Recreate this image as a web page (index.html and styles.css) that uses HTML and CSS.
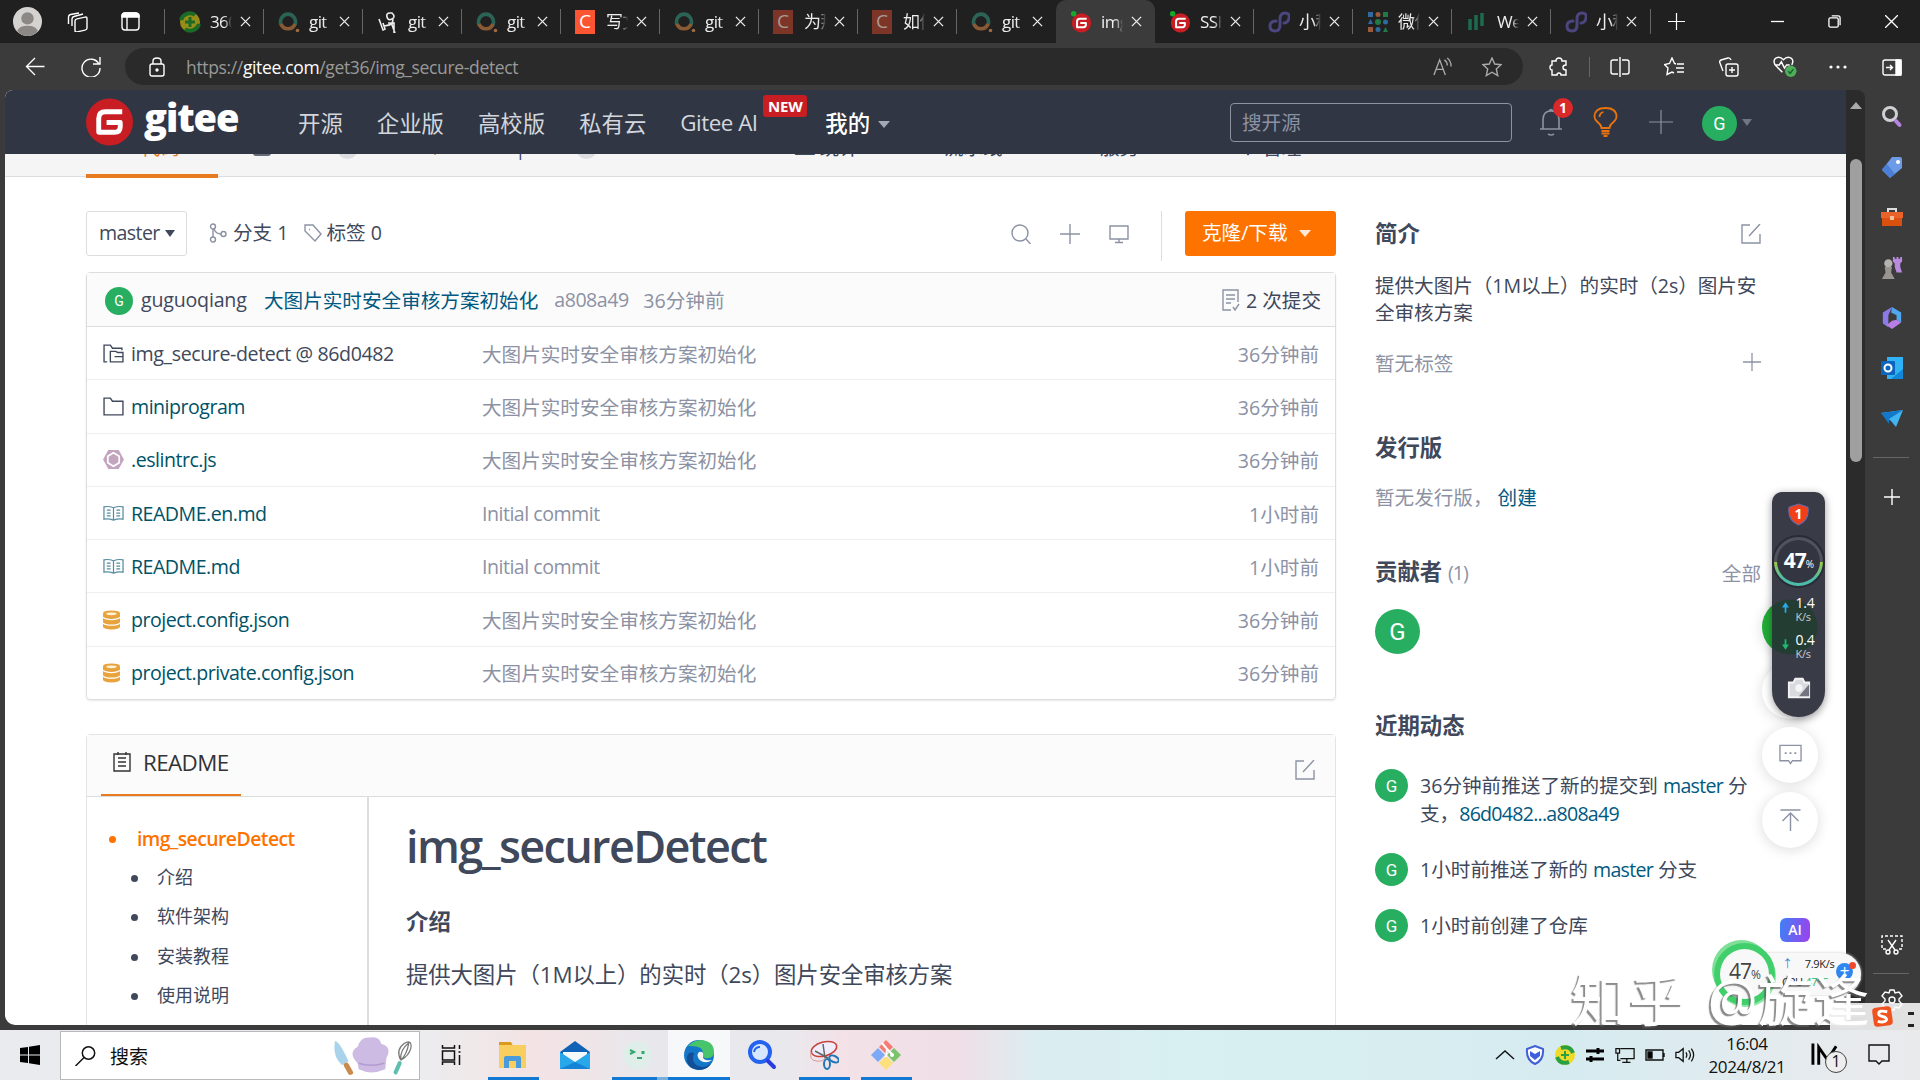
FILE: index.html
```html
<!DOCTYPE html>
<html lang="zh-CN">
<head>
    <meta charset="utf-8">
    <title>img_secure-detect - Gitee</title>
    <link rel="stylesheet" href="styles.css">
</head>

<body>

<svg class="defs" width="0" height="0">
    <symbol id="x" viewBox="0 0 12 12"><path d="M1 1l10 10M11 1L1 11"/></symbol>
    <symbol id="plus" viewBox="0 0 20 20"><path d="M10 0v20M0 10h20"/></symbol>
    <symbol id="edit" viewBox="0 0 20 20"><path d="M9 1H1v18h18v-9M8 12L19 0"/></symbol>
    <symbol id="folder" viewBox="0 0 20 18"><path d="M1 1h6l2 3h10v13H1z"/></symbol>
    <symbol id="book" viewBox="0 0 22 18"><path d="M1 2q5-1 10 1 5-2 10-1v13q-5-1-10 1-5-2-10-1zM11 3v13M4 5.500h4M4 8.500h4M4 11.500h4M14 5.500h4M14 8.500h4M14 11.500h4"/></symbol>
    <symbol id="db" viewBox="0 0 18 20"><path fill="#e8a33d" d="M0 3q0-3 9-3t9 3v14q0 3-9 3t-9-3z"/><path fill="none" stroke="#fff" stroke-width="1.300" d="M0 7q2 2.500 9 2.500T18 7M0 13q2 2.500 9 2.500t9-2.500"/><ellipse cx="9" cy="3.500" rx="5.500" ry="1.400" fill="#fff3d8"/></symbol>
    <symbol id="quant" viewBox="0 0 22 22"><g fill="none" stroke-width="3.600"><path stroke="#2b6355" d="M3 14a7.500 8 0 1 1 14 0"/><path stroke="#8a5a35" d="M3 13a7.500 7.500 0 0 0 14 0"/></g><circle cx="19.500" cy="19.500" r="1.800" fill="#a06a40"/></symbol>
    <symbol id="gitee" viewBox="0 0 48 48"><circle cx="24" cy="24" r="24" fill="#c71d23"/><path fill="none" stroke="#fff" stroke-width="5" stroke-linejoin="round" d="M37 13.500H20q-7 0-7 7v14h16q6 0 6-6v-4H21"/></symbol>
    <symbol id="snake" viewBox="0 0 22 22"><path fill="none" stroke="#4b4580" stroke-width="3" stroke-linecap="round" d="M8 10q-6 0-6 5t5 5 5-6V8q0-6 5-6t4 5-5 5"/></symbol>
</svg>

<!-- browser tabs -->
<div class="titlebar">
    <svg class="profile" viewBox="0 0 28 28"><circle cx="14" cy="14" r="14" fill="#d5d3d0"/><circle cx="14" cy="11" r="6" fill="#8b8885"/><path fill="#8b8885" d="M4 23q2-5 10-5t10 5q-4 5-10 5T4 23"/></svg>
    <svg class="line spaces" viewBox="0 0 22 20"><rect x="8" y="6" width="12" height="13" rx="2" transform="skewY(-12) translate(0 3)"/><path d="M5 14V7q0-2 2-2.500l9-2.500M1.500 12V5q0-2 2-2.500L12 1"/></svg>
    <svg class="line actions" viewBox="0 0 19 19"><rect x="1" y="1" width="17" height="17" rx="3"/><path d="M6 5v13"/><path fill="#fff" d="M1 5V3l2-2h12l3 2v2z"/></svg>
    <div class="tabs">
        <div class="tab"><svg class="fav" viewBox="0 0 22 22"><circle cx="11" cy="11" r="10" fill="#968e16"/><path fill="none" stroke="#1c6a28" stroke-width="4" d="M2 9a9 9 0 0 1 14-5M20 13a9 9 0 0 1-14 5"/><path stroke="#1c6a28" stroke-width="3" d="M11 6v10M6 11h10"/></svg><span>360</span><svg class="close"><use href="#x"/></svg></div>
        <div class="tab"><svg class="fav"><use href="#quant"/></svg><span>git</span><svg class="close"><use href="#x"/></svg></div>
        <div class="tab"><svg class="fav" viewBox="0 0 22 22"><path fill="none" stroke="#eee" stroke-width="1.600" d="M2 8l4 11 2-1-2-6M7 15q5 0 9-3M13 2q-4 0-3 4t5 2 0-6l-2 0M16 8l-1 6 3 8M11 12h6v10"/></svg><span>git</span><svg class="close"><use href="#x"/></svg></div>
        <div class="tab"><svg class="fav"><use href="#quant"/></svg><span>git</span><svg class="close"><use href="#x"/></svg></div>
        <div class="tab"><i class="fav csdn">C</i><span>写文</span><svg class="close"><use href="#x"/></svg></div>
        <div class="tab"><svg class="fav"><use href="#quant"/></svg><span>git</span><svg class="close"><use href="#x"/></svg></div>
        <div class="tab"><i class="fav csdn dim">C</i><span>为那</span><svg class="close"><use href="#x"/></svg></div>
        <div class="tab"><i class="fav csdn dim">C</i><span>如何</span><svg class="close"><use href="#x"/></svg></div>
        <div class="tab"><svg class="fav"><use href="#quant"/></svg><span>git</span><svg class="close"><use href="#x"/></svg></div>
        <div class="tab active"><svg class="fav" viewBox="0 0 22 24"><use href="#gitee" x="1" y="2" width="21" height="22"/><circle cx="3" cy="3" r="3" fill="#17a52b"/></svg><span>img</span><svg class="close"><use href="#x"/></svg></div>
        <div class="tab"><svg class="fav" viewBox="0 0 22 24"><use href="#gitee" x="1" y="2" width="21" height="22"/><circle cx="3" cy="3" r="3" fill="#17a52b"/></svg><span>SSH</span><svg class="close"><use href="#x"/></svg></div>
        <div class="tab"><svg class="fav"><use href="#snake"/></svg><span>小程</span><svg class="close"><use href="#x"/></svg></div>
        <div class="tab"><svg class="fav" viewBox="0 0 22 22"><g fill="#2f6aa0"><rect x="1" y="1" width="5" height="5"/><path d="M1 13l2.500-5L6 13z"/><circle cx="18.500" cy="11" r="2.500"/><circle cx="11" cy="18.500" r="2.500"/></g><g fill="#1f7a45"><rect x="16" y="1" width="5" height="5"/><circle cx="11" cy="11" r="3"/><path d="M16 21l2.500-5 2.500 5z"/></g><g fill="#9a5a3a"><circle cx="11" cy="3.500" r="2.500"/><rect x="1" y="16" width="5" height="5"/></g></svg><span>微信</span><svg class="close"><use href="#x"/></svg></div>
        <div class="tab"><svg class="fav" viewBox="0 0 22 22"><path stroke="#1d6b4f" stroke-width="3.500" d="M4 8v11M10 4v15M16 2v13"/></svg><span>We</span><svg class="close"><use href="#x"/></svg></div>
        <div class="tab"><svg class="fav"><use href="#snake"/></svg><span>小程</span><svg class="close"><use href="#x"/></svg></div>
        <i class="tabs-end"></i>
    </div>
    <svg class="line newtab"><use href="#plus"/></svg>
    <div class="winbtns">
        <svg class="line" viewBox="0 0 14 14"><path d="M0 7h14"/></svg>
        <svg class="line" viewBox="0 0 14 14"><rect x="1" y="3" width="10" height="10" rx="1.500"/><path d="M4 1h7q2 0 2 2v8"/></svg>
        <svg class="line" viewBox="0 0 14 14"><path d="M0 0l14 14M14 0L0 14"/></svg>
    </div>
</div>

<!-- address bar -->
<div class="toolbar">
    <svg class="line back" viewBox="0 0 20 20"><path d="M20 10H1M10 1l-9 9 9 9"/></svg>
    <svg class="line reload" viewBox="0 0 21 21"><path d="M19 8A9 9 0 1 0 20 12M20 1v7h-7"/></svg>
    <div class="address">
        <svg class="line lock" viewBox="0 0 16 20"><rect x="1" y="7" width="14" height="12" rx="2"/><path d="M4 7V4q0-3 4-3t4 3v3"/><circle cx="8" cy="13" r="1" fill="#fff"/></svg>
        <p class="url">https://<b>gitee.com</b>/get36/img_secure-detect</p>
        <svg class="line gray aloud" viewBox="0 0 20 20"><path d="M1 19L7 3l6 16M3 13h8M12 3q3 2 3 6M15 1q4 3 4 9"/></svg>
        <svg class="line gray star" viewBox="0 0 20 20"><path d="M10 1l2.700 6 6.300.700-4.700 4.300 1.400 6.500L10 15.200l-5.700 3.300L5.700 12 1 7.700 7.300 7z"/></svg>
    </div>
    <div class="tools">
        <svg class="line" viewBox="0 0 20 20"><path d="M3 4h4q0-3 3-3t3 3h4v4q-3 0-3 2.500T17 13v5h-5q0-2-2-2t-2 2H3v-5q-2 0-2-2.500T3 8z"/></svg>
        <i class="tool-line"></i>
        <svg class="line" viewBox="0 0 20 20"><path d="M10 0v20M8 3H3Q1 3 1 5v10q0 2 2 2h5M12 3h5q2 0 2 2v10q0 2-2 2h-5"/></svg>
        <svg class="line" viewBox="0 0 20 20"><path d="M12 7l-1.500-.500L8 1 5.500 6.500l-5 1L4 11l-1 6.500 5-2.500 2 1M13 7h7M12 11h8M13 15h7"/></svg>
        <svg class="line" viewBox="0 0 20 20"><rect x="7" y="7" width="12" height="12" rx="2"/><path d="M13 10v6M10 13h6M4 14l-3-8q-1-2 1-3l7-2q2-.500 3 2"/></svg>
        <svg class="line health" viewBox="0 0 23 21"><path d="M9 16L2 9Q0 5 2 3q4-3 8 1 4-4 8-1 2 2 0 6M2 9h4l2-3 3 6 2-3h3"/><circle cx="17" cy="15" r="5.500" fill="#4fae57" stroke="none"/><path d="M14.500 15l2 2 3-4" stroke="#163"/></svg>
        <svg viewBox="0 0 20 20" fill="#fff"><circle cx="3" cy="10" r="1.600"/><circle cx="10" cy="10" r="1.600"/><circle cx="17" cy="10" r="1.600"/></svg>
        <svg class="line" viewBox="0 0 20 18"><rect x="1" y="2" width="18" height="15" rx="2"/><path fill="#fff" d="M14 2h5v15h-5z"/><path d="M4 9.500h6M8 7l2.500 2.500L8 12"/></svg>
    </div>
</div>

<div class="main">
<div class="page">

    <div class="header">
        <svg class="logo"><use href="#gitee"/></svg>
        <span class="brand">gitee</span>
        <a>开源</a>
        <a>企业版</a>
        <a>高校版</a>
        <a>私有云</a>
        <a class="ai">Gitee AI<em>NEW</em></a>
        <a class="mine">我的<i class="caret"></i></a>
        <div class="search">搜开源</div>
        <div class="bell">
            <svg viewBox="0 0 24 30"><path d="M1 22h22M4 22v-9q0-9 8-9t8 9v9M9 27q3 2 6 0M10 4q2-3 4 0"/></svg>
            <em>1</em>
        </div>
        <svg class="bulb" viewBox="0 0 24 30"><path d="M8 21q0-3-4-6-3-3-3-5Q1 1 12 1t11 9q0 2-3 5-4 3-4 6zM8 24h8M8 26.500h8M10 29h4M6 10q0-4 4-5"/></svg>
        <svg class="add"><use href="#plus"/></svg>
        <span class="avatar head">G</span>
        <i class="caret"></i>
    </div>

    <!-- project nav, scrolled under the header -->
    <div class="subnav">
        <div class="subnav-row">
            <span class="current">‹› 代码</span>
            <i class="n-box"></i><i class="n-dot"></i><span class="n-hash">⑂</span><span class="n-bar">|</span><i class="n-dot last"></i>
            <span class="n-1">▬ 统计</span><span class="n-2">∞ 流水线</span><span class="n-3">服务</span><span class="n-4">⚙ 管理</span>
        </div>
    </div>

    <div class="content">
        <div class="left">
            <div class="actionbar">
                <div class="branch">master<i class="caret"></i></div>
                <svg class="ico fork" viewBox="0 0 18 20"><circle cx="4" cy="3.500" r="2.500"/><circle cx="4" cy="16.500" r="2.500"/><circle cx="14.500" cy="11" r="2.500"/><path d="M4 6v8M5 6q2 5 7 5"/></svg>
                <span>分支 1</span>
                <svg class="ico tag" viewBox="0 0 18 20"><path d="M1 2h8l8 9-6 7-10-10zM5 6.500h1"/></svg>
                <span>标签 0</span>
                <div class="icons">
                    <svg class="ico" viewBox="0 0 20 20"><circle cx="9" cy="9" r="8"/><path d="M15 15l4.500 5"/></svg>
                    <svg class="ico"><use href="#plus"/></svg>
                    <svg class="ico" viewBox="0 0 20 20"><path d="M1 2h18v13H1zM10 15v3M6 18.500h8"/></svg>
                </div>
                <div class="clone">克隆/下载<i class="caret"></i></div>
            </div>

            <div class="files">
                <div class="row commit">
                    <span class="avatar small">G</span>
                    <span class="author">guguoqiang</span>
                    <a class="title">大图片实时安全审核方案初始化</a>
                    <span class="hash en">a808a49</span>
                    <span class="when">36分钟前</span>
                    <span class="count"><svg class="ico" viewBox="0 0 18 22"><path d="M9 21H1V1h15v12M4 6h9M4 10h9M4 14h5M11 18l2 3 4-6"/></svg>2 次提交</span>
                </div>
                <div class="row">
                    <svg class="fi dark" viewBox="0 0 20 18"><path d="M4 17H1V1h6l2 3h9v2M7 8v9h12V8h-5l-2-1H7zM11 12h8"/></svg>
                    <span class="name en plain">img_secure-detect @ 86d0482</span><span class="msg">大图片实时安全审核方案初始化</span><span class="time">36分钟前</span>
                </div>
                <div class="row">
                    <svg class="fi dark"><use href="#folder"/></svg>
                    <span class="name en">miniprogram</span><span class="msg">大图片实时安全审核方案初始化</span><span class="time">36分钟前</span>
                </div>
                <div class="row">
                    <svg class="fi" viewBox="0 0 22 20"><path fill="#c3a5c0" stroke="none" d="M5.500 0h11L22 10l-5.500 10h-11L0 10z"/><path fill="none" stroke="#fff" stroke-width="1.800" d="M11 3l6 3.500v7L11 17l-6-3.500v-7z"/></svg>
                    <span class="name en">.eslintrc.js</span><span class="msg">大图片实时安全审核方案初始化</span><span class="time">36分钟前</span>
                </div>
                <div class="row">
                    <svg class="fi blue"><use href="#book"/></svg>
                    <span class="name en">README.en.md</span><span class="msg en">Initial commit</span><span class="time">1小时前</span>
                </div>
                <div class="row">
                    <svg class="fi blue"><use href="#book"/></svg>
                    <span class="name en">README.md</span><span class="msg en">Initial commit</span><span class="time">1小时前</span>
                </div>
                <div class="row">
                    <svg class="fi db"><use href="#db"/></svg>
                    <span class="name en">project.config.json</span><span class="msg">大图片实时安全审核方案初始化</span><span class="time">36分钟前</span>
                </div>
                <div class="row">
                    <svg class="fi db"><use href="#db"/></svg>
                    <span class="name en">project.private.config.json</span><span class="msg">大图片实时安全审核方案初始化</span><span class="time">36分钟前</span>
                </div>
            </div>

            <div class="readme">
                <div class="readme-head">
                    <div class="readme-tab">
                        <svg viewBox="0 0 18 20"><path d="M1 2h16v17H1zM5 6h8M5 10h8M5 14h8M5 0v3M13 0v3"/></svg>
                        README
                    </div>
                    <svg class="ico"><use href="#edit"/></svg>
                </div>
                <div class="readme-body">
                    <ul class="toc">
                        <li class="top">img_secureDetect</li>
                        <li>介绍</li>
                        <li>软件架构</li>
                        <li>安装教程</li>
                        <li>使用说明</li>
                    </ul>
                    <div class="doc">
                        <h1>img_secureDetect</h1>
                        <h3>介绍</h3>
                        <p>提供大图片（1M以上）的实时（2s）图片安全审核方案</p>
                    </div>
                </div>
            </div>
        </div>

        <div class="right">
            <div class="line-row intro"><h4>简介</h4><svg class="ico"><use href="#edit"/></svg></div>
            <p class="desc">提供大图片（1M以上）的实时（2s）图片安<br>全审核方案</p>
            <div class="line-row labels"><span class="muted">暂无标签</span><svg class="ico"><use href="#plus"/></svg></div>
            <h4 class="release">发行版</h4>
            <p class="norelease"><span class="muted">暂无发行版，</span><a>创建</a></p>
            <div class="line-row people"><h4>贡献者 <small>(1)</small></h4><span class="muted">全部</span></div>
            <span class="avatar big">G</span>
            <h4 class="recent">近期动态</h4>
            <div class="event"><span class="avatar mid">G</span><p>36分钟前推送了新的提交到 <a class="en">master</a> 分<br>支，<a class="en">86d0482...a808a49</a></p></div>
            <div class="event"><span class="avatar mid">G</span><p>1小时前推送了新的 <a class="en">master</a> 分支</p></div>
            <div class="event"><span class="avatar mid">G</span><p>1小时前创建了仓库</p></div>
        </div>
    </div>
</div>

<div class="scroll"><i class="arrow"></i><i class="thumb"></i></div>

<div class="sidebar">
    <svg viewBox="0 0 22 22"><circle cx="9" cy="8" r="6.500" fill="none" stroke="#cfcfd4" stroke-width="3"/><path stroke="#b783e0" stroke-width="4" stroke-linecap="round" d="M15 15l3.500 4"/></svg>
    <svg viewBox="0 0 22 22"><path fill="#6c9ce8" d="M11 1h8q2 0 2 2v9L9 22 1 14z"/><path fill="#4b7fd6" d="M1 13l8 9 5-4-8-10z"/><circle cx="17" cy="6" r="2" fill="#fff"/></svg>
    <svg viewBox="0 0 22 22"><path fill="none" stroke="#ddd" stroke-width="2" d="M7 6V3h8v3"/><path fill="#e8622a" d="M0 6h22v6H0z"/><path fill="#d9500f" d="M1 12h20v8H1z"/><path fill="#f7c09a" d="M9 10h4v4H9z"/></svg>
    <svg viewBox="0 0 22 24"><path fill="#b98ae0" d="M12 0h2v2h2V0h2v2h2V0h2v5l-2 2v4l2 6h-6l-2-6V7l-2-2z"/><circle cx="7" cy="7" r="4.500" fill="#b5b2af"/><path fill="#98948f" d="M3 11h8l-1 6 4 7H0l4-7z"/></svg>
    <svg viewBox="0 0 22 24"><path fill="#8a7be8" d="M11 0L1 6v12l6 4V9z"/><path fill="#4fa8ee" d="M11 0l10 6v11l-5-3V9l-6-3z"/><path fill="#b77fe6" d="M21 17l-10 7-6-4 6-5 5-1z"/></svg>
    <svg viewBox="0 0 22 22"><path fill="#31b2f4" d="M6 0h16v22H6z"/><path fill="#1486d8" d="M10 22L22 12v10z"/><rect y="4" width="14" height="14" rx="1" fill="#0a66bd"/><circle cx="7" cy="11" r="3.500" fill="none" stroke="#fff" stroke-width="2"/></svg>
    <svg viewBox="0 0 22 22"><path fill="#41b4f2" d="M0 6l22-3-7 17-5-6z"/><path fill="#1478c8" d="M0 6l22-3-14 9v5z"/></svg>
    <hr>
    <svg class="line side-plus" viewBox="0 0 22 22"><path d="M11 3v16M3 11h16"/></svg>
    <svg class="line snip" viewBox="0 0 22 22"><path stroke-dasharray="3 2" d="M5 15H1V2h20v13h-4"/><path d="M7 6l7 10M15 6L8 16"/><circle cx="7" cy="18" r="2"/><circle cx="15" cy="18" r="2"/></svg>
    <hr class="second">
    <svg class="line gear" viewBox="0 0 22 22"><circle cx="11" cy="11" r="3"/><path d="M9 1h4l1 3 4-1 3 4-3 3v2l3 3-3 4-4-1-1 3H9l-1-3-4 1-3-4 3-3v-2L1 7l3-4 4 1z"/></svg>
</div>
</div>

<div class="taskbar">
    <svg class="start" viewBox="0 0 20 20"><path d="M0 3l8-1v7.500H0zM9 1.800L20 0v9.500H9zM0 10.500h8V18l-8-1zM9 10.500h11V20L9 18.200z"/></svg>
    <div class="tasksearch">
        <svg viewBox="0 0 20 20"><circle cx="13" cy="7" r="6.200"/><path d="M8.500 11.500L0 20"/></svg>
        搜索
        <svg class="chef" viewBox="0 0 80 40"><path fill="#a8d3ea" d="M4 5q5 2 13 20l-6 4Q1 20 4 5z"/><path stroke="#c98a4b" stroke-width="5" stroke-linecap="round" d="M15 29l4 7"/><path fill="#cdbbe4" d="M26 27q-10-10 0-16 3-10 12-9 9-2 11 6 11 3 5 14l-1 11q-14 6-26 0z"/><path stroke="#b19cd0" fill="none" d="M27 27q12 4 25 0"/><path fill="none" stroke="#777" stroke-width="1.200" d="M68 24q-5-10 3-16 8-5 7 4-2 8-10 12M68 24q-1-10 8-17M68 24q6-5 8-17"/><path stroke="#5fbfae" stroke-width="4" stroke-linecap="round" d="M67 27l-4 9"/></svg>
    </div>
    <div class="apps">
        <div class="app"><svg class="tview" viewBox="0 0 20 20"><path d="M1 0v3h12V0M1 6h12v9H1zM1 20v-3h12v3M18 0v4M18 10v10M17 7h2"/></svg></div>
        <div class="app on"><svg viewBox="0 0 30 30"><path fill="#d99b1e" d="M1 2h12l2 4H1z"/><path fill="#f8cf5f" d="M1 5h27v23H1z"/><path fill="#4a9bdb" d="M6 28V18q0-2 2-2h13q2 0 2 2v10h-5v-7h-7v7z"/></svg></div>
        <div class="app"><svg viewBox="0 0 30 30"><path fill="#0f62b5" d="M0 12L15 1l15 11v5H0z"/><path fill="#f4f8fb" d="M3 12h24v10H3z"/><path fill="#28a8ea" d="M0 12l15 10 15-10v17H0z"/><path fill="#1583d6" d="M15 22l15 7H0z"/></svg></div>
        <div class="app multi"><svg viewBox="0 0 30 30"><circle cx="15" cy="15" r="14" fill="#dfeee8"/><path fill="none" stroke="#34a66f" stroke-width="2" d="M8 10l4 2-4 2M15 18h5"/><path stroke="#34a66f" stroke-width="3" d="M21 11v3"/></svg></div>
        <div class="app focus"><svg viewBox="0 0 30 30"><circle cx="15" cy="15" r="15" fill="#1577c8"/><path fill="#48c46b" d="M4 6q6-6 13-6 13 1 13 12 0 7-9 6-4-1-2-5 0-8-15-7z"/><path fill="#124f98" d="M10 13q-4 12 8 14 6 0 10-5-4 8-13 8Q2 29 3 17q1-6 7-4z"/><path fill="#f5f5f5" d="M15 12q5-1 4 4-1 5 9 4-5 4-11 1-6-5-2-9z"/></svg></div>
        <div class="app"><svg viewBox="0 0 30 30"><circle cx="13" cy="12" r="10" fill="#d7e7ff" stroke="#2463f0" stroke-width="4"/><path stroke="#2a3be0" stroke-width="4" stroke-linecap="round" d="M21 21l6 6"/><path fill="none" stroke="#2463f0" stroke-width="2" d="M7 12q1-5 6-5"/></svg></div>
        <div class="app on"><svg viewBox="0 0 30 30"><ellipse cx="15" cy="9" rx="13" ry="7" fill="#eef" stroke="#c9433b" stroke-width="1.500" transform="rotate(-15 15 9)"/><path fill="none" stroke="#d99" d="M2 12q-2 8 5 9t9-3"/><path stroke="#666" stroke-width="1.500" d="M14 4l2 14M6 11l13 7"/><g fill="none" stroke="#2176b5" stroke-width="2"><ellipse cx="18" cy="24" rx="3" ry="5"/><ellipse cx="25" cy="19" rx="5" ry="3" transform="rotate(25 25 19)"/></g></svg></div>
        <div class="app on"><svg viewBox="0 0 30 30"><path fill="#f47c75" d="M15 0l7 7-7 7-7-7z"/><path fill="#7ea9f5" d="M7 8l7 7-7 7-7-7z"/><path fill="#7cc46b" d="M23 8l7 7-7 7-7-7z"/><path fill="#fbe07b" d="M15 16l7 7-7 7-7-7z"/><path fill="none" stroke="#fff" stroke-width="2" d="M11 3l5 6 5 5M16 9l-1 8"/><circle cx="21" cy="15" r="2" fill="#fff"/></svg></div>
    </div>
    <div class="tray">
        <svg class="bl" viewBox="0 0 20 20"><path d="M1 14l9-8 9 8"/></svg>
        <svg viewBox="0 0 20 20"><path fill="#fff" stroke="#4060d8" stroke-width="2" d="M10 1l8 3q1 11-8 15Q1 15 2 4z"/><path fill="#3f5fe0" d="M5 6l5 3 5-3v5l-5 4-5-4z"/></svg>
        <svg viewBox="0 0 20 20"><circle cx="10" cy="10" r="10" fill="#f0d929"/><path fill="none" stroke="#2aa043" stroke-width="4" d="M6 3q9-3 12 5M14 17q-9 3-12-5"/><path stroke="#2aa043" stroke-width="2" d="M10 6v8M6 10h8"/></svg>
        <svg viewBox="0 0 20 20"><path stroke="#000" stroke-width="3" d="M1 6h18M1 14h18"/><path stroke="#000" stroke-width="3" d="M13 3v6M6 11v6"/></svg>
        <svg class="bl" viewBox="0 0 22 20"><path d="M6 3h15v11H6M13 14v4M8 18h9M1 3h4v5H1zM3 8v8h3"/></svg>
        <svg class="bl" viewBox="0 0 20 20"><path d="M1 5h17v10H1zM19 8v4"/><path fill="#000" d="M3 7h4v6H3z"/></svg>
        <svg class="bl" viewBox="0 0 22 20"><path d="M1 7h3l5-4v14l-5-4H1zM12 7q2 3 0 6M15 5q4 5 0 10M18 3q5 7 0 14"/></svg>
        <div class="clock">16:04<br>2024/8/21</div>
        <div class="mi"><svg viewBox="0 0 30 24"><path fill="none" stroke="#000" stroke-width="3" d="M2 0v22M8 22V4l9 13 9-14"/></svg><em>1</em></div>
        <svg class="bl note" viewBox="0 0 22 22"><path d="M1 1h20v16h-7l-3 3-3-3H1z"/></svg>
    </div>
</div>

<!-- widgets floating over the page -->
<div class="round help"></div>
<div class="round gift"></div>
<div class="monitor">
    <svg class="shield" viewBox="0 0 20 22"><path fill="#f03f1b" stroke="#6a6aa5" d="M10 1l9 3q2 12-9 17Q-1 16 1 4z"/></svg>
    <b class="shield-no">1</b>
    <div class="ring"><span>47<small>%</small></span></div>
    <div class="speed"><svg class="up" viewBox="0 0 8 12"><path d="M4 0l4 6H5v6H3V6H0z"/></svg><p>1.4<small>K/s</small></p></div>
    <div class="speed"><svg class="down" viewBox="0 0 8 12"><path d="M4 12L0 6h3V0h2v6h3z"/></svg><p>0.4<small>K/s</small></p></div>
    <svg class="camera" viewBox="0 0 26 22"><path fill="#d9dade" stroke="#f3f3f5" stroke-width="2" d="M2 5h5l2-4h8l2 4h5v16H2z"/><path fill="#72747f" d="M24 7v13H13z"/><circle cx="13" cy="11" r="4" fill="#f6f6f8"/></svg>
</div>
<div class="round comment"><svg class="ico" viewBox="0 0 24 22"><path d="M1 1h22v16h-9l-2 3-2-3H1z"/><path stroke-width="2" d="M6 9h2M11 9h2M16 9h2"/></svg></div>
<div class="round totop"><svg class="ico" viewBox="0 0 20 22"><path d="M0 1h20M10 22V4M2 12l8-8 8 8"/></svg></div>
<div class="aibadge">AI</div>
<div class="net">
    <p><i>↑</i>7.9K/s</p>
    <p class="temp">CPU <b>47°C</b></p>
    <span class="netplus">+</span>
</div>
<div class="ball">47<small>%</small></div>
<div class="watermark">知乎 <span>@旋逢</span></div>
<div class="ime"><svg viewBox="0 0 22 22"><rect x="1" y="1" width="20" height="20" rx="4" fill="#f0531f" transform="rotate(-8 11 11)"/><path fill="none" stroke="#fff" stroke-width="3" d="M16 6q-9-2-9 2 0 2 4 3 5 1 4 4-2 3-9 1"/></svg><i></i></div>

</body>
</html>
```
FILE: styles.css
```css
* {
    box-sizing: border-box;
}

body {
    margin: 0;
    width: 1920px;
    height: 1080px;
    overflow: hidden;
    position: relative;
    background-color: #3b3b3b;
    font-family: "Open Sans", "Noto Sans CJK SC", sans-serif;
    font-size: 19.6px;
    color: #40485b;
}

p, h1, h3, h4, ul {
    margin: 0;
    padding: 0;
}

svg {
    display: block;
    flex: none;
}

i, em {
    font-style: normal;
}

.defs {
    position: absolute;
}

a {
    color: #005980;
}

.en {
    letter-spacing: -0.5px;
}

.line {
    fill: none;
    stroke: #fff;
    stroke-width: 1.4;
}

.gray {
    stroke: #aaa;
}

.ico {
    fill: none;
    stroke: #8c92a4;
    stroke-width: 1.4;
    width: 20px;
    height: 20px;
}

.caret {
    display: inline-block;
    border: 6px solid transparent;
    border-top: 7px solid #a3a8b5;
    border-bottom: 0;
}

.avatar {
    display: flex;
    flex: none;
    align-items: center;
    justify-content: center;
    border-radius: 50%;
    background-color: #27ae60;
    color: #fff;
    font-family: Roboto, sans-serif;
}

/* browser frame */

.titlebar {
    height: 43px;
    display: flex;
    align-items: center;
    background-color: #202020;
    color: #eee;
}

.profile {
    width: 29px;
    height: 29px;
    margin-left: 13px;
}

.spaces {
    width: 22px;
    height: 20px;
    margin-left: 25px;
}

.actions {
    width: 19px;
    height: 19px;
    margin-left: 32px;
}

.tabs {
    display: flex;
    align-self: stretch;
    margin-left: 25px;
}

.tab {
    position: relative;
    width: 99px;
    display: flex;
    align-items: center;
    padding-left: 14px;
    font-size: 17px;
}

.tab::before,
.tabs-end {
    content: "";
    position: absolute;
    left: -1px;
    top: 9px;
    width: 1px;
    height: 25px;
    background-color: #666;
}

.tabs-end {
    position: static;
    margin-top: 9px;
}

.tab.active {
    background-color: #3b3b3b;
    border-radius: 10px 10px 0 0;
}

.tab.active::before,
.tab.active + .tab::before {
    display: none;
}

.tab span {
    width: 22px;
    height: 26px;
    line-height: 25px;
    margin-left: 9px;
    overflow: hidden;
    white-space: nowrap;
    letter-spacing: -0.6px;
    -webkit-mask-image: linear-gradient(90deg, #000 65%, transparent);
    mask-image: linear-gradient(90deg, #000 65%, transparent);
}

.fav {
    width: 22px;
    height: 22px;
    flex: none;
}

.csdn {
    width: 20px;
    height: 24px;
    margin-right: 2px;
    line-height: 23px;
    background-color: #fc5531;
    color: #fff;
    font-size: 19px;
    text-align: center;
}

.csdn.dim {
    background-color: #7d3528;
    color: #a89a97;
}

.close {
    width: 11px;
    height: 11px;
    margin-left: 8px;
    stroke: #eee;
    stroke-width: 1.4;
}

.newtab {
    width: 17px;
    height: 17px;
    margin-left: 17px;
}

.winbtns {
    display: flex;
    gap: 44px;
    margin-left: auto;
    margin-right: 22px;
}

.winbtns svg {
    width: 13px;
    height: 13px;
}

.toolbar {
    height: 47px;
    display: flex;
    align-items: center;
    background-color: #3b3b3b;
}

.back {
    width: 20px;
    height: 19px;
    margin-left: 25px;
}

.reload {
    width: 21px;
    height: 21px;
    margin-left: 35px;
}

.address {
    width: 1398px;
    height: 37px;
    margin-left: 24px;
    display: flex;
    align-items: center;
    border-radius: 19px;
    background-color: #2a2a2a;
}

.lock {
    width: 16px;
    height: 20px;
    margin-left: 24px;
}

.url {
    margin-left: 21px;
    font-size: 17.5px;
    letter-spacing: -0.35px;
    color: #999;
}

.url b {
    color: #fff;
    font-weight: normal;
}

.aloud {
    width: 19px;
    height: 19px;
    margin-left: auto;
}

.star {
    width: 20px;
    height: 20px;
    margin: 0 21px 0 30px;
}

.tools {
    flex: 1;
    display: flex;
    align-items: center;
    justify-content: space-between;
    padding: 0 18px 0 26px;
}

.tools svg {
    width: 20px;
    height: 20px;
}

.tools .health {
    width: 24px;
    height: 23px;
    margin: 0 -3px 0 0;
}

.tool-line {
    width: 1px;
    height: 20px;
    margin-right: -14px;
    margin-left: -14px;
    background-color: #666;
}

.main {
    height: 935px;
    margin-left: 5px;
    display: flex;
}

/* gitee header */

.page {
    width: 1841px;
    overflow: hidden;
    background-color: #fff;
    border-radius: 8px 0 0 10px;
}

.header {
    height: 64px;
    padding-left: 81px;
    display: flex;
    align-items: center;
    background-color: #303643;
    color: #d3d6dd;
    font-size: 22.4px;
    position: relative;
    z-index: 1;
}

.header a {
    color: #d3d6dd;
    margin-right: 34px;
    white-space: nowrap;
}

.logo {
    width: 47px;
    height: 48px;
}

.brand {
    width: 154px;
    margin-left: 11px;
    margin-top: -10px;
    color: #fff;
    font-size: 38px;
    font-weight: 800;
    letter-spacing: -1.1px;
}

.header .ai {
    position: relative;
    width: 78px;
    letter-spacing: -0.5px;
    margin-right: 67px;
}

.ai em {
    position: absolute;
    left: 83px;
    top: -12px;
    width: 44px;
    height: 22px;
    line-height: 22px;
    border-radius: 3px;
    background-color: #c71d23;
    color: #fff;
    font-size: 15px;
    font-weight: 700;
    letter-spacing: -0.2px;
    text-align: center;
}

.header .mine {
    color: #fff;
    font-weight: 500;
    margin-right: 0;
}

.mine .caret {
    margin: 0 0 4px 8px;
}

.search {
    width: 282px;
    height: 39px;
    line-height: 38px;
    margin-left: auto;
    padding-left: 11px;
    border: 1px solid #8c92a4;
    border-radius: 4px;
    color: #8c92a4;
    font-size: 19.6px;
}

.bell {
    position: relative;
    margin-left: 27px;
}

.bell svg {
    width: 24px;
    height: 30px;
    fill: none;
    stroke: #8c92a4;
    stroke-width: 1.6;
}

.bell em {
    position: absolute;
    left: 14px;
    top: -9px;
    width: 20px;
    height: 20px;
    line-height: 20px;
    border-radius: 50%;
    background-color: #db2828;
    color: #fff;
    font-size: 14px;
    font-weight: 700;
    text-align: center;
}

.bulb {
    width: 25px;
    height: 30px;
    margin-left: 30px;
    fill: none;
    stroke: #e8720e;
    stroke-width: 1.8;
}

.add {
    width: 24px;
    height: 24px;
    margin-left: 31px;
    stroke: #8c92a4;
}

.head {
    width: 35px;
    height: 35px;
    margin: 2px 0 0 29px;
    font-size: 18px;
}

.header > .caret {
    margin: 0 94px 0 5px;
    border-top-color: #6f7686;
    border-left-width: 5px;
    border-right-width: 5px;
}

.subnav {
    display: flow-root;
    height: 23px;
    background-color: #f5f5f5;
    border-bottom: 1px solid #dcddde;
}

.subnav-row {
    position: relative;
    height: 49px;
    margin-top: -25px;
    line-height: 37px;
    white-space: nowrap;
}

.subnav-row > * {
    position: absolute;
    top: 0;
}

.subnav-row .current {
    left: 81px;
    width: 132px;
    height: 49px;
    text-align: center;
    color: #e87b1d;
    border-bottom: 4px solid #e87b1d;
}

.subnav-row .n-box {
    left: 248px;
    top: 9px;
    width: 18px;
    height: 18px;
    border: 2px solid #666b78;
    border-radius: 3px;
}

.subnav-row .n-dot {
    left: 332px;
    top: 9px;
    width: 21px;
    height: 21px;
    border-radius: 50%;
    background-color: #dcdde0;
}

.subnav-row .last { left: 571px; }
.n-hash { left: 424px; }
.n-bar { left: 510px; }
.n-1 { left: 790px; }
.n-2 { left: 920px; }
.n-3 { left: 1095px; }
.n-4 { left: 1234px; }

/* repository */

.content {
    display: flex;
    padding: 34px 0 0 81px;
}

.left {
    width: 1250px;
}

.actionbar {
    height: 61px;
    display: flex;
    align-items: flex-start;
    line-height: 44px;
}

.branch {
    width: 101px;
    height: 45px;
    line-height: 42px;
    padding-left: 12px;
    border: 1px solid #dcddde;
    border-radius: 3px;
    letter-spacing: -0.6px;
    white-space: nowrap;
}

.branch .caret {
    margin: 0 0 3px 5px;
    border-width: 7px 5px 0;
    border-top-color: #40485b;
}

.fork {
    margin: 12px 6px 0 22px;
    width: 18px;
}

.tag {
    margin: 12px 4px 0 16px;
    width: 18px;
}

.icons {
    display: flex;
    gap: 29px;
    margin-left: auto;
    padding: 13px 32px 0 0;
    height: 50px;
    border-right: 1px solid #dcddde;
}

.clone {
    width: 151px;
    height: 45px;
    line-height: 44px;
    margin-left: 23px;
    padding-left: 17px;
    border-radius: 3px;
    background-color: #fe7300;
    color: #fff;
}

.clone .caret {
    margin: 0 0 3px 11px;
    border-top-color: #ffe9d6;
}

.files {
    border: 1px solid #dcddde;
    border-radius: 4px;
    box-shadow: 0 1px 2px #e8e8ea;
}

.row {
    height: 53.3px;
    display: flex;
    align-items: center;
    padding: 0 16px;
    border-top: 1px solid #eeeff0;
}

.row.commit {
    height: 53px;
    padding-right: 14px;
    border: 0;
    background-color: #fbfbfb;
}

.commit + .row {
    border-top-color: #dcddde;
}

.small {
    width: 28px;
    height: 28px;
    margin: 3px 8px 0 2px;
    font-size: 14px;
}

.author {
    width: 123px;
    letter-spacing: -0.2px;
}

.hash {
    width: 89px;
    margin-left: 16px;
    color: #8c92a4;
}

.when, .msg, .time, .muted {
    color: #8c92a4;
}

.count {
    display: flex;
    align-items: center;
    margin-left: auto;
}

.count .ico {
    width: 18px;
    height: 22px;
    margin-right: 6px;
}

.fi {
    width: 21px;
    height: 19px;
    margin-right: 7px;
    fill: none;
    stroke-width: 1.3;
}

.dark {
    stroke: #40485b;
}

.blue {
    stroke: #578ca0;
}

.db {
    width: 17px;
    height: 20px;
    margin-right: 11px;
}

.name {
    width: 351px;
    color: #005266;
}

.name.plain {
    color: #40485b;
    letter-spacing: -0.4px;
}

.time {
    margin-left: auto;
}

.readme {
    height: 300px;
    margin-top: 34px;
    border: 1px solid #e3e4e6;
    border-radius: 4px;
}

.readme-head {
    height: 62px;
    display: flex;
    justify-content: space-between;
    padding: 0 20px 0 14px;
    border-bottom: 1px solid #dcddde;
    background-color: #fbfbfb;
}

.readme-head .ico {
    margin-top: 25px;
}

.readme-tab {
    height: 61px;
    width: 140px;
    display: flex;
    align-items: center;
    padding: 0 0 5px 12px;
    border-bottom: 2px solid #e87b1d;
    color: #333;
    font-size: 22.4px;
    letter-spacing: -0.6px;
}

.readme-tab svg {
    width: 18px;
    height: 20px;
    margin-right: 12px;
    fill: none;
    stroke: #333;
    stroke-width: 1.4;
}

.readme-body {
    display: flex;
    height: 238px;
}

.toc {
    width: 282px;
    padding: 22px 0 0 70px;
    border-right: 2px solid #dcddde;
    font-size: 18px;
    list-style: none;
}

.toc li {
    position: relative;
    height: 39.2px;
    line-height: 39.2px;
}

.toc li::before {
    content: "";
    position: absolute;
    left: -26px;
    top: 17px;
    width: 7px;
    height: 7px;
    border-radius: 50%;
    background-color: #40485b;
}

.toc .top {
    margin-left: -20px;
    color: #fe7300;
    font-size: 19.4px;
    font-weight: 600;
    letter-spacing: -0.55px;
}

.toc .top::before {
    left: -28px;
    background-color: #fe7300;
}

.doc {
    padding-left: 37px;
}

.doc h1 {
    margin-top: 16px;
    font-size: 45px;
    line-height: 66px;
    font-weight: 600;
    letter-spacing: -1.65px;
}

.doc h3 {
    margin-top: 26px;
    font-size: 22.4px;
    line-height: 34px;
}

.doc p {
    margin-top: 18px;
    font-size: 22.4px;
    line-height: 36px;
    letter-spacing: -0.1px;
    white-space: nowrap;
}

.right {
    width: 386px;
    margin-left: 39px;
}

.right h4 {
    font-size: 22.4px;
    line-height: 30px;
}

.line-row {
    display: flex;
    align-items: center;
    justify-content: space-between;
    height: 30px;
}

.intro {
    margin-top: 8px;
}

.desc {
    margin-top: 23px;
    line-height: 27px;
    letter-spacing: -0.05px;
    white-space: nowrap;
}

.labels {
    margin-top: 21px;
}

.labels .ico {
    width: 18px;
    height: 18px;
}

.release {
    margin-top: 56px;
}

.norelease {
    margin-top: 21px;
    line-height: 28px;
}

.norelease a {
    margin-left: 5px;
}

.people {
    margin-top: 45px;
}

.people small {
    color: #8c92a4;
    font-size: 19.6px;
    font-weight: normal;
    letter-spacing: -1px;
}

.big {
    width: 45px;
    height: 45px;
    margin-top: 22px;
    font-size: 24px;
}

.recent {
    margin-top: 57px;
}

.event {
    display: flex;
    margin-top: 28px;
    line-height: 28px;
    white-space: nowrap;
}

.event:last-child {
    margin-top: 26px;
}

.event a {
    letter-spacing: -0.75px;
}

.recent + .event {
    margin-top: 31px;
}

.mid {
    width: 33px;
    height: 33px;
    margin: -3px 12px 0 0;
    font-size: 17px;
}

/* scrollbar and edge sidebar */

.scroll {
    width: 19px;
    padding: 12px 0 0 4px;
    border-radius: 0 8px 0 0;
    background-color: #2b2b2b;
}

.arrow {
    display: block;
    border: 6px solid transparent;
    border-top: 0;
    border-bottom: 7px solid #aaa;
    width: 0;
}

.thumb {
    display: block;
    width: 12px;
    height: 303px;
    margin-top: 50px;
    border-radius: 6px;
    background-color: #9f9f9f;
}

.sidebar {
    flex: 1;
    padding: 16px 0 0 16px;
}

.sidebar svg {
    width: 22px;
    height: 22px;
    margin-bottom: 28.2px;
}

.sidebar hr {
    width: 36px;
    margin: 27px 0 28px -8px;
    border: 0;
    border-top: 1px solid #666;
}

.sidebar .side-plus {
    margin-bottom: 426px;
}

.sidebar .snip {
    margin-bottom: 17px;
}

.sidebar .second {
    margin: 0 0 15px -8px;
}

/* taskbar */

.taskbar {
    position: absolute;
    left: 0;
    bottom: 0;
    width: 1920px;
    height: 50px;
    display: flex;
    align-items: center;
    background: linear-gradient(90deg, #e9ebee 0, #ececee 22%, #f3e3e4 28%, #e8e8ec 34%, #e9e9ed 41%, #f3e1e7 44%, #f0dfe7 50%, #dbedf1 54%, #d8f0f1 62%, #d6ebf0 82%, #e3ebef 92%, #eaeaec 100%);
    color: #111;
}

.start {
    width: 20px;
    height: 20px;
    margin: 0 20px;
}

.tasksearch {
    width: 360px;
    height: 49px;
    margin-top: 1px;
    display: flex;
    align-items: center;
    padding-left: 14px;
    border: 1px solid #b9b9bb;
    background-color: #fff;
    font-size: 19px;
}

.tasksearch svg {
    width: 21px;
    height: 20px;
    margin-right: 14px;
    fill: none;
    stroke: #111;
    stroke-width: 1.5;
}

.tasksearch .chef {
    width: 82px;
    height: 42px;
    margin: 0 6px 0 auto;
    stroke: none;
}

.apps {
    display: flex;
    height: 50px;
}

.app {
    width: 62.1px;
    display: flex;
    position: relative;
    align-items: center;
    justify-content: center;
}

.app svg {
    width: 30px;
    height: 30px;
}

.app .tview {
    width: 21px;
    height: 20px;
    fill: none;
    stroke: #111;
    stroke-width: 1.5;
}

.app.focus {
    background-color: #f7f8f9;
}

.on::after, .multi::after, .focus::after {
    content: "";
    position: absolute;
    left: 6px;
    right: 5px;
    bottom: 0;
    height: 3px;
    background-color: #1179d3;
}

.multi::after {
    right: 0;
    background: linear-gradient(90deg, #1179d3 80%, #7aaedb 80%);
}

.focus::after {
    left: 0;
    right: 0;
}

.tray {
    display: flex;
    align-items: center;
    gap: 10px;
    margin-left: auto;
    padding-right: 30px;
}

.tray svg {
    width: 20px;
    height: 20px;
}

.bl {
    fill: none;
    stroke: #111;
    stroke-width: 1.4;
}

.clock {
    width: 84px;
    font-size: 17px;
    line-height: 23px;
    text-align: center;
    letter-spacing: -0.4px;
    white-space: nowrap;
}

.mi {
    position: relative;
    margin: 0 18px 0 12px;
}

.tray .mi svg {
    width: 29px;
    height: 24px;
}

.mi em {
    position: absolute;
    left: 14px;
    top: 8px;
    width: 22px;
    height: 22px;
    line-height: 19px;
    border: 1px solid #444;
    border-radius: 50%;
    background-color: #eee;
    font-size: 16px;
    text-align: center;
}

.tray .note {
    width: 22px;
    height: 22px;
}

/* floating widgets */

.round {
    position: absolute;
    left: 1762px;
    width: 56px;
    height: 56px;
    display: flex;
    align-items: center;
    justify-content: center;
    border-radius: 50%;
    background-color: #fff;
    box-shadow: 0 2px 14px rgba(0, 0, 0, 0.14);
}

.help {
    top: 599px;
    background-color: #22ac38;
}

.gift { top: 663px; }
.comment { top: 727px; }
.totop { top: 792px; }

.round .ico {
    width: 23px;
    height: 22px;
}

.monitor {
    position: absolute;
    left: 1772px;
    top: 492px;
    width: 53px;
    height: 225px;
    border-radius: 10px 10px 26px 26px;
    background: radial-gradient(circle at 18px 135px, #243d32 27px, transparent 28px), #393b47;
    box-shadow: 0 2px 8px rgba(0, 0, 0, 0.4);
    color: #fff;
    display: flex;
    flex-direction: column;
    align-items: center;
}

.shield {
    width: 21px;
    height: 23px;
    margin-top: 11px;
}

.shield-no {
    font-size: 14px;
    line-height: 20px;
    margin-top: -22px;
}

.ring {
    width: 53px;
    height: 53px;
    margin-top: 11px;
    padding: 3px;
    border-radius: 50%;
    background: linear-gradient(#50525e 50%, #9bc94d 52%, #4dbba9 85%);
    border: 2px solid #292c35;
}

.ring span {
    display: block;
    height: 43px;
    line-height: 41px;
    border-radius: 50%;
    background-color: #333641;
    font-size: 21px;
    font-weight: 700;
    letter-spacing: -1px;
    text-align: center;
    white-space: nowrap;
}

.ring small {
    font-size: 10px;
    font-weight: normal;
}

.speed {
    display: flex;
    gap: 7px;
    height: 37px;
    margin-left: -1px;
    font-size: 14px;
    line-height: 14px;
    letter-spacing: -0.3px;
}

.ring + .speed {
    margin-top: 8px;
}

.speed svg {
    width: 7px;
    height: 11px;
    margin-top: 6px;
}

.speed small {
    display: block;
    font-size: 11px;
    color: #ccc;
}

.up { fill: #29a8e8; }
.down { fill: #1dba72; }

.camera {
    width: 24px;
    height: 22px;
    margin-top: 7px;
}

.aibadge {
    position: absolute;
    left: 1780px;
    top: 918px;
    width: 30px;
    height: 24px;
    line-height: 24px;
    border-radius: 6px;
    background: linear-gradient(100deg, #3b82f6, #a040ec);
    color: #fff;
    font-size: 14px;
    font-weight: 600;
    text-align: center;
}

.net {
    position: absolute;
    left: 1750px;
    top: 953px;
    width: 111px;
    height: 42px;
    padding: 2px 32px 0 32px;
    border-radius: 0 22px 22px 0;
    background-color: #f8f8f9;
    box-shadow: 0 0 3px #ccc;
    color: #222;
    font-size: 11px;
    line-height: 18px;
    letter-spacing: -0.3px;
    white-space: nowrap;
}

.net i {
    margin-right: 12px;
    color: #2f86e0;
}

.temp b {
    color: #2dbb67;
    font-weight: normal;
}

.netplus {
    position: absolute;
    right: 8px;
    top: 10px;
    width: 17px;
    height: 17px;
    line-height: 15px;
    border-radius: 50%;
    background-color: #2f86f0;
    color: #fff;
    font-size: 17px;
    text-align: center;
}

.netplus::after {
    content: "";
    position: absolute;
    right: -3px;
    top: -1px;
    width: 7px;
    height: 7px;
    border-radius: 50%;
    background-color: #f0482c;
}

.ball {
    position: absolute;
    left: 1714px;
    top: 943px;
    width: 61px;
    height: 62px;
    border: 6px solid #41cf6c;
    border-radius: 50%;
    background-color: #f8f8f8;
    box-shadow: -3px -4px 0 -1px #7fdf98, 1px 2px 0 #8ce6a4;
    color: #444;
    font-size: 21px;
    line-height: 44px;
    text-align: center;
    letter-spacing: -1px;
}

.ball small {
    font-size: 12px;
}

.ime {
    position: absolute;
    left: 1830px;
    top: 1003px;
    width: 90px;
    height: 27px;
    padding: 3px 6px 0 42px;
    display: flex;
    justify-content: space-between;
    background-color: rgba(255, 255, 255, 0.85);
}

.ime svg {
    width: 21px;
    height: 21px;
}

.ime i {
    width: 6px;
    height: 15px;
    margin-top: 6px;
    border-top: 3px solid #222;
    border-bottom: 3px solid #222;
}

.watermark {
    position: absolute;
    left: 1571px;
    top: 964px;
    color: #fff;
    font-size: 56px;
    line-height: 70px;
    letter-spacing: 2px;
    white-space: nowrap;
    text-shadow: -2px 2px 1px rgba(90, 90, 90, 0.7);
}

.watermark span {
    margin-left: 4px;
    letter-spacing: 0;
}
```
